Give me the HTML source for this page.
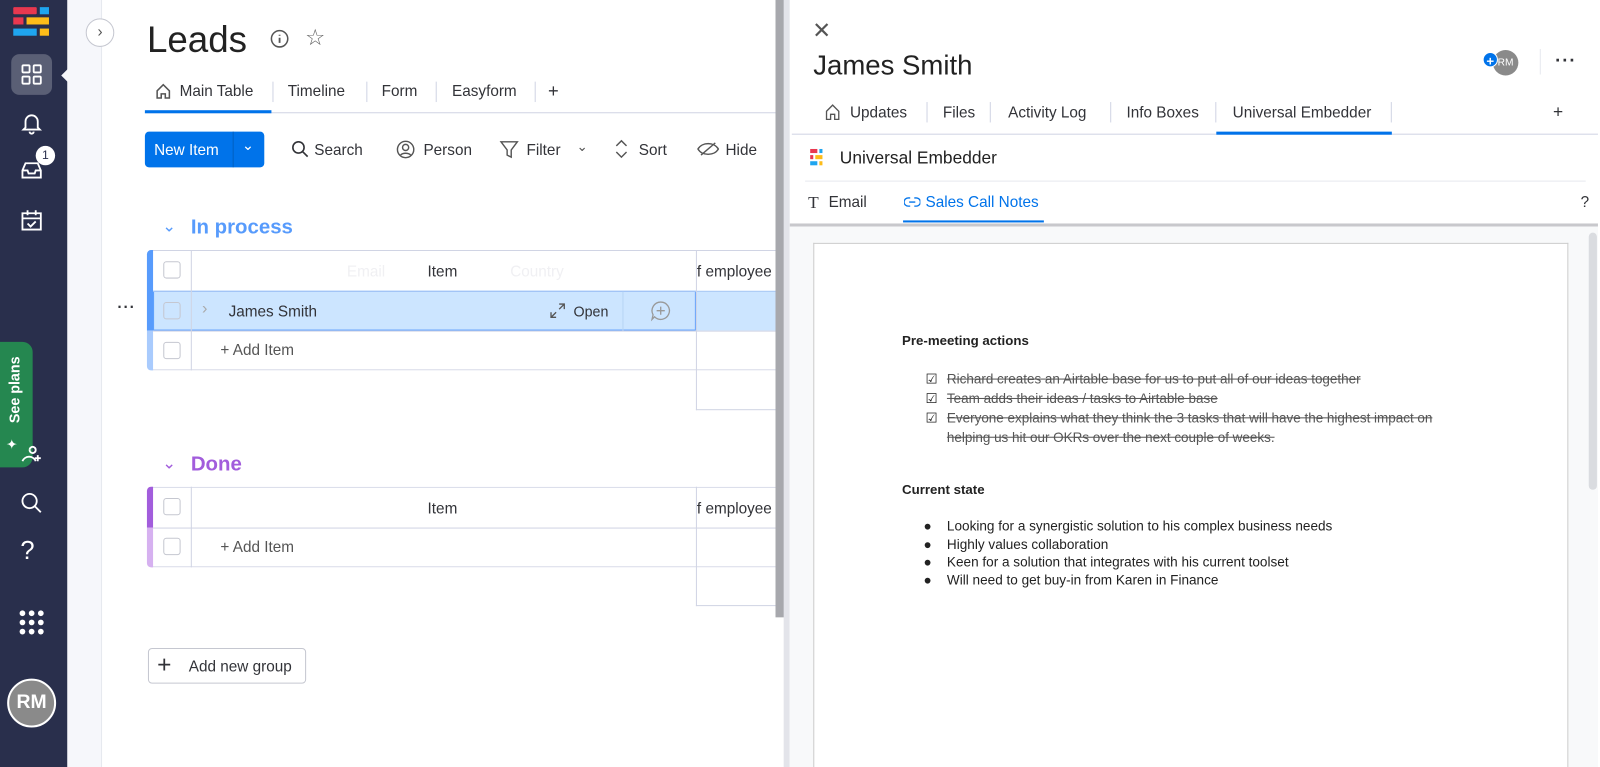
<!DOCTYPE html>
<html><head><meta charset="utf-8"><style>
*{box-sizing:border-box;margin:0;padding:0}
body{width:1600px;height:752px;overflow:hidden;position:relative;font-family:"Liberation Sans",sans-serif;color:#323338;background:#fff}
#w{position:absolute;left:0;top:0;width:1568px;height:737px;transform:scale(1.0204);transform-origin:0 0}
.a{position:absolute}
.sb{left:0;top:0;width:66px;height:752px;background:#292f4c}
.strip{left:66px;top:0;width:34px;height:752px;background:#f6f7fb;border-right:1px solid #e6e9ef}
.ico{stroke:#fff;fill:none;stroke-width:1.8}
.t{font-size:15px;color:#323338}
.cb{width:17px;height:17px;border:1px solid #c5c7d0;border-radius:3px;background:#fff}
.doc{font-family:"Liberation Sans",sans-serif;font-size:13.2px;color:#222}
.st{text-decoration:line-through;color:#555}
</style></head><body><div id="w">
<!-- sidebar -->
<div class="a sb"></div>
<div class="a" style="left:13px;top:7px;width:23px;height:7px;background:#e8384f;border-radius:1px"></div>
<div class="a" style="left:39px;top:7px;width:9px;height:7px;background:#1fa5ef"></div>
<div class="a" style="left:13px;top:17px;width:10px;height:7px;background:#e8384f"></div>
<div class="a" style="left:26px;top:17px;width:22px;height:7px;background:#fdbc19"></div>
<div class="a" style="left:13px;top:28px;width:23px;height:7px;background:#1fa5ef"></div>
<div class="a" style="left:39px;top:28px;width:9px;height:7px;background:#fdbc19"></div>
<div class="a" style="left:11px;top:53px;width:40px;height:40px;background:#5a5f75;border-radius:8px"></div>
<svg class="a" style="left:19px;top:61px" width="24" height="24"><g class="ico" stroke-width="1.6"><rect x="3" y="3" width="7" height="7" rx="1"/><rect x="14" y="3" width="7" height="7" rx="1"/><rect x="3" y="14" width="7" height="7" rx="1"/><rect x="14" y="14" width="7" height="7" rx="1"/></g></svg>
<div class="a" style="left:60px;top:66px;width:0;height:0;border-top:8px solid transparent;border-bottom:8px solid transparent;border-right:8px solid #f6f7fb;z-index:2"></div>
<svg class="a" style="left:19px;top:108px" width="24" height="26"><path class="ico" d="M6 17V11a6 6 0 0 1 12 0v6l2 2H4z M10 21a2 2 0 0 0 4 0"/></svg>
<svg class="a" style="left:19px;top:155px" width="24" height="24"><path class="ico" d="M3 12l3-7h12l3 7v7H3z M3 12h5l1 3h6l1-3h5"/></svg>
<div class="a" style="left:35px;top:143px;width:19px;height:19px;border-radius:50%;background:#fff;color:#292f4c;font-size:12px;text-align:center;line-height:19px">1</div>
<svg class="a" style="left:19px;top:204px" width="24" height="24"><path class="ico" d="M3 5h18v16H3z M3 10h18 M8 2v5 M16 2v5 M8 15l3 3 5-5"/></svg>
<div class="a" style="left:0;top:335px;width:32px;height:123px;background:#258750;border-radius:0 10px 10px 0"></div>
<div class="a" style="left:-23px;top:372px;width:78px;height:20px;transform:rotate(-90deg);color:#fff;font-size:14px;font-weight:bold;text-align:center">See plans</div>
<div class="a" style="left:6px;top:428px;color:#fff;font-size:13px">✦</div>
<svg class="a" style="left:19px;top:432px" width="24" height="24"><path class="ico" d="M10 9a3 3 0 1 0 0-.1 M3 20a7 7 0 0 1 13 0 M18 14v6 M15 17h6"/></svg>
<svg class="a" style="left:19px;top:481px" width="24" height="24"><circle class="ico" cx="10" cy="10" r="7"/><path class="ico" d="M15 15l6 6"/></svg>
<div class="a" style="left:20px;top:526px;color:#fff;font-size:25px">?</div>
<svg class="a" style="left:18px;top:597px" width="26" height="26" fill="#fff"><circle cx="4" cy="4" r="2.8"/><circle cx="13" cy="4" r="2.8"/><circle cx="22" cy="4" r="2.8"/><circle cx="4" cy="13" r="2.8"/><circle cx="13" cy="13" r="2.8"/><circle cx="22" cy="13" r="2.8"/><circle cx="4" cy="22" r="2.8"/><circle cx="13" cy="22" r="2.8"/><circle cx="22" cy="22" r="2.8"/></svg>
<div class="a" style="left:7px;top:665px;width:48px;height:48px;border-radius:50%;background:#8a8a8a;border:2px solid #fff;color:#fff;font-size:19px;font-weight:bold;text-align:center;line-height:44px">RM</div>
<div class="a strip"></div>
<div class="a" style="left:84px;top:18px;width:28px;height:28px;border-radius:50%;border:1px solid #c5c7d0;background:#fff;text-align:center;line-height:25px;font-size:15px;color:#555">›</div>

<!-- main -->
<div class="a" style="left:144px;top:18px;font-size:36px;color:#222">Leads</div>
<svg class="a" style="left:264px;top:28px" width="20" height="20"><circle cx="10" cy="10" r="8" fill="none" stroke="#555" stroke-width="1.5"/><path d="M10 9v5M10 6v1" stroke="#555" stroke-width="1.8"/></svg>
<div class="a" style="left:299px;top:24px;font-size:22px;color:#666">☆</div>
<svg class="a" style="left:151px;top:80px" width="18" height="18"><path d="M3 9l6-6 6 6v7h-4v-4H7v4H3z" fill="none" stroke="#555" stroke-width="1.5"/></svg>
<div class="a t" style="left:176px;top:81px">Main Table</div>
<div class="a t" style="left:282px;top:81px">Timeline</div>
<div class="a t" style="left:374px;top:81px">Form</div>
<div class="a t" style="left:443px;top:81px">Easyform</div>
<div class="a t" style="left:537px;top:79px;font-size:18px">+</div>
<div class="a" style="left:267px;top:80px;width:1px;height:20px;background:#d0d4e4"></div>
<div class="a" style="left:359px;top:80px;width:1px;height:20px;background:#d0d4e4"></div>
<div class="a" style="left:427px;top:80px;width:1px;height:20px;background:#d0d4e4"></div>
<div class="a" style="left:524px;top:80px;width:1px;height:20px;background:#d0d4e4"></div>
<div class="a" style="left:142px;top:110px;width:620px;height:1px;background:#d0d4e4"></div>
<div class="a" style="left:142px;top:108px;width:124px;height:3px;background:#0073ea"></div>
<div class="a" style="left:142px;top:129px;width:117px;height:35px;background:#0073ea;border-radius:4px"></div>
<div class="a" style="left:151px;top:139px;color:#fff;font-size:15px">New Item</div>
<div class="a" style="left:228px;top:129px;width:1px;height:35px;background:#0060c0"></div>
<div class="a" style="left:237px;top:134px;color:#fff;font-size:14px">⌄</div>
<svg class="a" style="left:285px;top:137px" width="18" height="18"><circle cx="7.5" cy="7.5" r="5.5" fill="none" stroke="#323338" stroke-width="1.6"/><path d="M11.5 11.5l5 5" stroke="#323338" stroke-width="1.6"/></svg>
<div class="a t" style="left:308px;top:139px">Search</div>
<svg class="a" style="left:388px;top:137px" width="19" height="19"><circle cx="9.5" cy="9.5" r="8" fill="none" stroke="#555" stroke-width="1.4"/><circle cx="9.5" cy="7.5" r="3" fill="none" stroke="#555" stroke-width="1.4"/><path d="M4.5 15a6 4 0 0 1 10 0" fill="none" stroke="#555" stroke-width="1.4"/></svg>
<div class="a t" style="left:415px;top:139px">Person</div>
<svg class="a" style="left:489px;top:137px" width="20" height="19"><path d="M2 2h16l-6 8v7l-4-2v-5z" fill="none" stroke="#555" stroke-width="1.4"/></svg>
<div class="a t" style="left:516px;top:139px">Filter</div>
<div class="a" style="left:565px;top:136px;font-size:13px;color:#555">⌄</div>
<svg class="a" style="left:602px;top:136px" width="14" height="20"><path d="M2 7l5-5 5 5M2 13l5 5 5-5" fill="none" stroke="#555" stroke-width="1.4"/></svg>
<div class="a t" style="left:626px;top:139px">Sort</div>
<svg class="a" style="left:683px;top:138px" width="22" height="16"><path d="M1 8c4-7 16-7 20 0c-4 7-16 7-20 0z" fill="none" stroke="#555" stroke-width="1.4"/><path d="M4 14L18 2" stroke="#555" stroke-width="1.4"/></svg>
<div class="a t" style="left:711px;top:139px">Hide</div>

<!-- group 1 -->
<div class="a" style="left:159px;top:212px;color:#579bfc;font-size:16px">⌄</div>
<div class="a" style="left:187px;top:212px;color:#579bfc;font-size:20px;font-weight:bold">In process</div>
<div class="a" style="left:145px;top:245px;width:620px;height:118px;border:1px solid #d0d4e4;border-left:none;border-radius:4px;background:#fff"></div>
<div class="a" style="left:144px;top:245px;width:6px;height:79px;background:#579bfc;border-radius:4px 0 0 0"></div>
<div class="a" style="left:144px;top:324px;width:6px;height:39px;background:#a9cbfd;border-radius:0 0 0 4px"></div>
<div class="a" style="left:150px;top:285px;width:532px;height:39px;background:#cce5ff;border:1px solid #579bfc"></div>
<div class="a" style="left:682px;top:285px;width:83px;height:39px;background:#cce5ff"></div>
<div class="a" style="left:150px;top:285px;width:615px;height:1px;background:#a9c8f5"></div>
<div class="a" style="left:150px;top:324px;width:615px;height:1px;background:#d0d4e4"></div>
<div class="a" style="left:187px;top:245px;width:1px;height:118px;background:#d0d4e4"></div>
<div class="a" style="left:682px;top:245px;width:1px;height:157px;background:#d0d4e4"></div>
<div class="a" style="left:682px;top:401px;width:83px;height:1px;background:#d0d4e4"></div>
<div class="a cb" style="left:160px;top:256px"></div>
<div class="a cb" style="left:160px;top:296px;background:#cce5ff"></div>
<div class="a cb" style="left:160px;top:335px"></div>
<div class="a t" style="left:419px;top:258px">Item</div>
<div class="a" style="left:340px;top:258px;font-size:15px;color:#f0f0f3">Email</div>
<div class="a" style="left:500px;top:258px;font-size:15px;color:#f0f0f3">Country</div>
<div class="a t" style="left:683px;top:258px">f employee</div>
<div class="a" style="left:115px;top:293px;font-size:15px;font-weight:bold;letter-spacing:1px">···</div>
<div class="a" style="left:198px;top:294px;color:#aaa;font-size:16px">›</div>
<div class="a t" style="left:224px;top:297px">James Smith</div>
<svg class="a" style="left:538px;top:296px" width="17" height="17"><path d="M10 2h5v5M15 2l-5 5M7 15H2v-5M2 15l5-5" fill="none" stroke="#555" stroke-width="1.3"/></svg>
<div class="a t" style="left:562px;top:297px;font-size:14px">Open</div>
<div class="a" style="left:610px;top:286px;width:1px;height:38px;background:#b8d4f4"></div>
<svg class="a" style="left:637px;top:294px" width="21" height="21"><path d="M10.5 2a8.5 8.5 0 1 1-6 14.5L2 19l1-4.5A8.5 8.5 0 0 1 10.5 2zM10.5 6.5v8M6.5 10.5h8" fill="none" stroke="#999" stroke-width="1.3"/></svg>
<div class="a" style="left:216px;top:335px;font-size:15px;color:#555">+ Add Item</div>

<!-- group 2 -->
<div class="a" style="left:159px;top:444px;color:#a25ddc;font-size:16px">⌄</div>
<div class="a" style="left:187px;top:444px;color:#a25ddc;font-size:20px;font-weight:bold">Done</div>
<div class="a" style="left:145px;top:477px;width:620px;height:79px;border:1px solid #d0d4e4;border-left:none;border-radius:4px;background:#fff"></div>
<div class="a" style="left:144px;top:477px;width:6px;height:40px;background:#a25ddc;border-radius:4px 0 0 0"></div>
<div class="a" style="left:144px;top:517px;width:6px;height:39px;background:#d6b1f0;border-radius:0 0 0 4px"></div>
<div class="a" style="left:150px;top:517px;width:615px;height:1px;background:#d0d4e4"></div>
<div class="a" style="left:187px;top:477px;width:1px;height:79px;background:#d0d4e4"></div>
<div class="a" style="left:682px;top:477px;width:1px;height:117px;background:#d0d4e4"></div>
<div class="a" style="left:682px;top:593px;width:83px;height:1px;background:#d0d4e4"></div>
<div class="a cb" style="left:160px;top:488px"></div>
<div class="a cb" style="left:160px;top:527px"></div>
<div class="a t" style="left:419px;top:490px">Item</div>
<div class="a t" style="left:683px;top:490px">f employee</div>
<div class="a" style="left:216px;top:528px;font-size:15px;color:#555">+ Add Item</div>
<div class="a" style="left:145px;top:635px;width:155px;height:35px;border:1px solid #c5c7d0;border-radius:4px"></div>
<div class="a" style="left:154px;top:638px;font-size:24px;font-weight:300">+</div>
<div class="a t" style="left:185px;top:645px">Add new group</div>

<!-- divider -->
<div class="a" style="left:760px;top:0;width:11px;height:605px;background:#a7a8ad"></div>
<div class="a" style="left:768px;top:0;width:6px;height:752px;background:#e3e4ea"></div>

<!-- panel -->
<div class="a" style="left:774px;top:0;width:826px;height:752px;background:#fff"></div>
<div class="a" style="left:796px;top:17px;font-size:22px;color:#555;font-weight:300">✕</div>
<div class="a" style="left:797px;top:49px;font-size:27px;color:#222">James Smith</div>
<div class="a" style="left:1463px;top:49px;width:25px;height:25px;border-radius:50%;background:#8a8a8a;color:#fff;font-size:10px;text-align:center;line-height:25px">RM</div>
<div class="a" style="left:1453px;top:51px;width:15px;height:15px;border-radius:50%;background:#0073ea;color:#fff;font-size:13px;font-weight:bold;text-align:center;line-height:15px;border:1px solid #fff">+</div>
<div class="a" style="left:1509px;top:48px;width:1px;height:25px;background:#e6e9ef"></div>
<div class="a" style="left:1524px;top:49px;font-size:18px;font-weight:bold;letter-spacing:1px">···</div>
<svg class="a" style="left:808px;top:101px" width="16" height="17"><path d="M2 8l6-6 6 6v8h-4v-5H6v5H2z" fill="none" stroke="#555" stroke-width="1.3"/></svg>
<div class="a t" style="left:833px;top:102px">Updates</div>
<div class="a t" style="left:924px;top:102px">Files</div>
<div class="a t" style="left:988px;top:102px">Activity Log</div>
<div class="a t" style="left:1104px;top:102px">Info Boxes</div>
<div class="a t" style="left:1208px;top:102px">Universal Embedder</div>
<div class="a t" style="left:1522px;top:100px;font-size:17px">+</div>
<div class="a" style="left:908px;top:100px;width:1px;height:20px;background:#d0d4e4"></div>
<div class="a" style="left:970px;top:100px;width:1px;height:20px;background:#d0d4e4"></div>
<div class="a" style="left:1088px;top:100px;width:1px;height:20px;background:#d0d4e4"></div>
<div class="a" style="left:1191px;top:100px;width:1px;height:20px;background:#d0d4e4"></div>
<div class="a" style="left:1363px;top:100px;width:1px;height:20px;background:#d0d4e4"></div>
<div class="a" style="left:776px;top:131px;width:790px;height:1px;background:#d0d4e4"></div>
<div class="a" style="left:1192px;top:129px;width:172px;height:3px;background:#0073ea"></div>
<div class="a" style="left:794px;top:146px;width:7px;height:4px;background:#e8384f"></div>
<div class="a" style="left:803px;top:146px;width:3px;height:4px;background:#1fa5ef"></div>
<div class="a" style="left:794px;top:152px;width:3px;height:4px;background:#e8384f"></div>
<div class="a" style="left:799px;top:152px;width:7px;height:4px;background:#fdbc19"></div>
<div class="a" style="left:794px;top:158px;width:7px;height:4px;background:#1fa5ef"></div>
<div class="a" style="left:803px;top:158px;width:3px;height:4px;background:#fdbc19"></div>
<div class="a" style="left:823px;top:145px;font-size:17px;color:#222">Universal Embedder</div>
<div class="a" style="left:789px;top:177px;width:765px;height:1px;background:#e6e9ef"></div>
<div class="a" style="left:792px;top:189px;font-size:17px;font-family:'Liberation Serif',serif">T</div>
<div class="a t" style="left:812px;top:190px">Email</div>
<svg class="a" style="left:886px;top:192px" width="16" height="12"><path d="M6 2H4a4 4 0 0 0 0 8h2M10 2h2a4 4 0 0 1 0 8h-2M5 6h6" fill="none" stroke="#0073ea" stroke-width="1.3"/></svg>
<div class="a" style="left:907px;top:190px;font-size:15px;color:#0073ea">Sales Call Notes</div>
<div class="a" style="left:885px;top:216px;width:138px;height:2px;background:#0073ea"></div>
<div class="a t" style="left:1549px;top:190px">?</div>
<div class="a" style="left:774px;top:219px;width:792px;height:3px;background:#c8c8cc"></div>
<div class="a" style="left:774px;top:222px;width:792px;height:530px;background:#f8f9fa"></div>
<div class="a" style="left:797px;top:238px;width:740px;height:514px;background:#fff;border:1px solid #ccc;border-bottom:none"></div>
<div class="a" style="left:1557px;top:228px;width:8px;height:252px;background:#dadce0;border-radius:4px"></div>
<div class="a doc" style="left:884px;top:326px;font-weight:bold;font-size:13px">Pre-meeting actions</div>
<div class="a doc" style="left:907px;top:362px;line-height:19px">
<div><span style="display:inline-block;width:21px">☑</span><span class="st">Richard creates an Airtable base for us to put all of our ideas together</span></div>
<div><span style="display:inline-block;width:21px">☑</span><span class="st">Team adds their ideas / tasks to Airtable base</span></div>
<div><span style="display:inline-block;width:21px">☑</span><span class="st">Everyone explains what they think the 3 tasks that will have the highest impact on</span></div>
<div style="padding-left:21px"><span class="st">helping us hit our OKRs over the next couple of weeks.</span></div>
</div>
<div class="a doc" style="left:884px;top:472px;font-weight:bold;font-size:13px">Current state</div>
<div class="a doc" style="left:905px;top:507px;line-height:17.6px;font-size:13.3px">
<div><span style="display:inline-block;width:23px">●</span>Looking for a synergistic solution to his complex business needs</div>
<div><span style="display:inline-block;width:23px">●</span>Highly values collaboration</div>
<div><span style="display:inline-block;width:23px">●</span>Keen for a solution that integrates with his current toolset</div>
<div><span style="display:inline-block;width:23px">●</span>Will need to get buy-in from Karen in Finance</div>
</div>
</div></body></html>
